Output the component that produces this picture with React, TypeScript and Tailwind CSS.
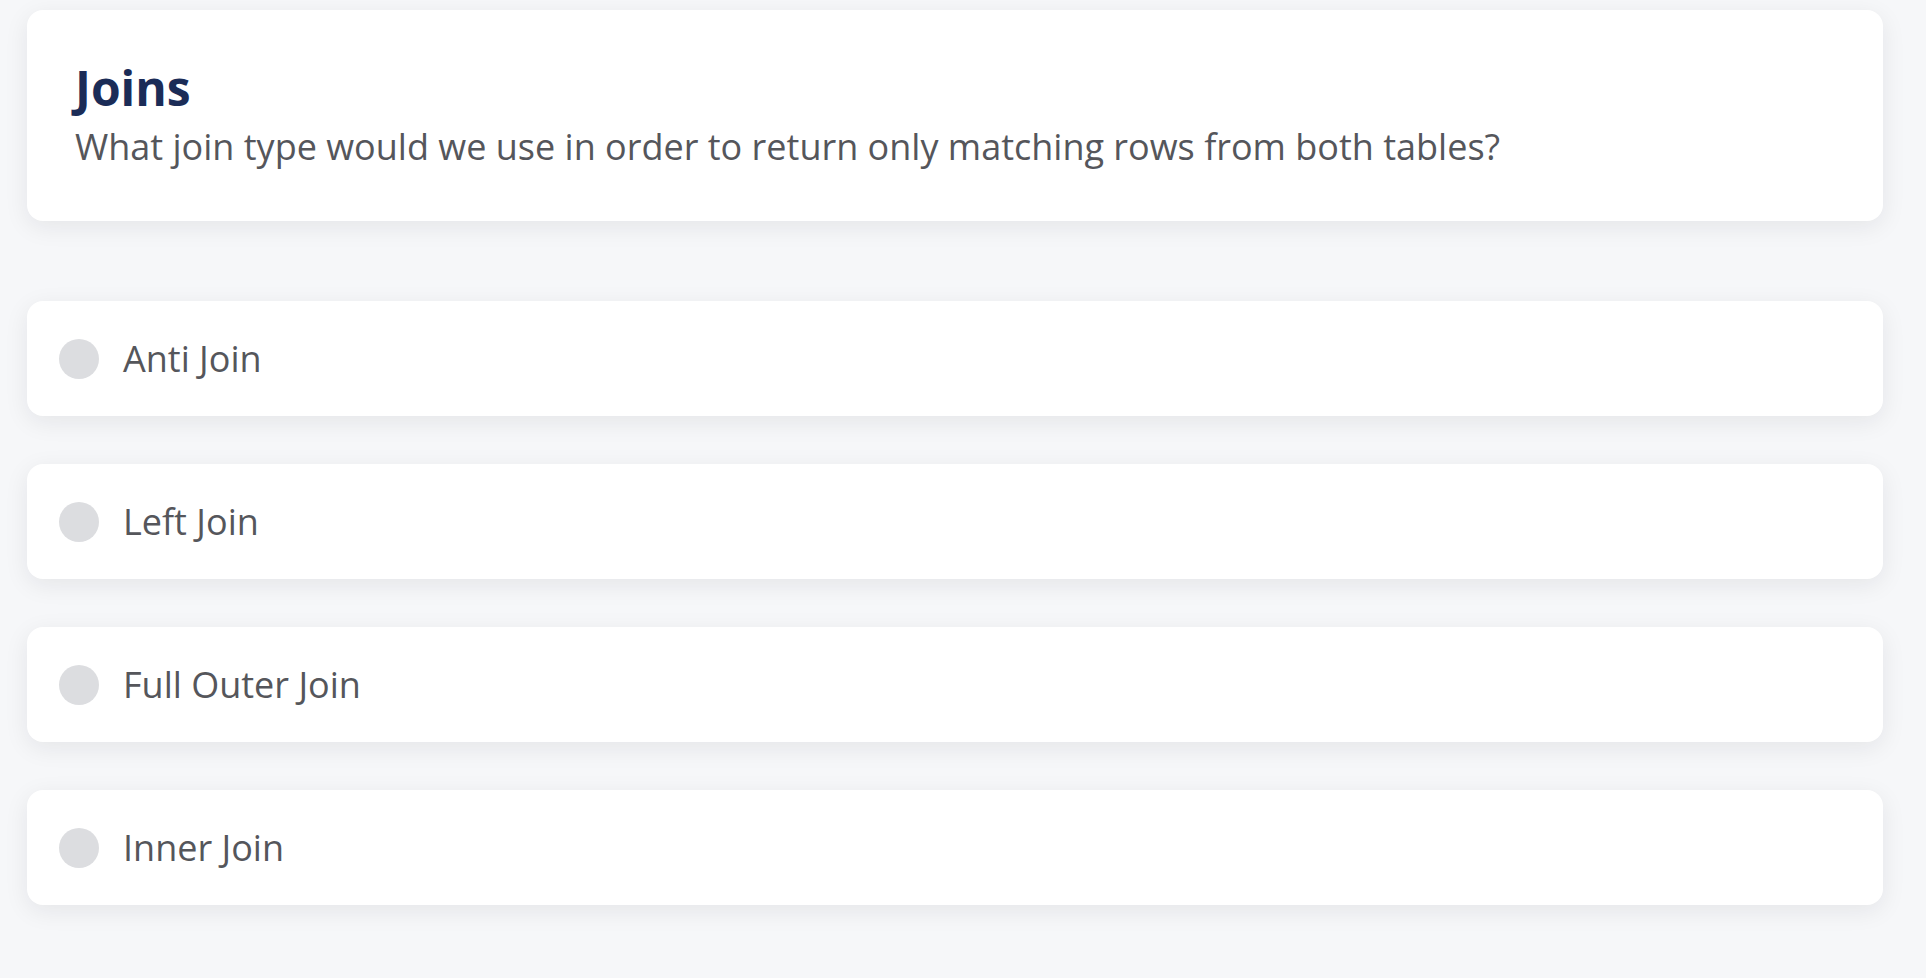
import React from 'react';

const options = ['Anti Join', 'Left Join', 'Full Outer Join', 'Inner Join'];

export default function App() {
  return (
    <div
      className="min-h-screen bg-[#f6f7f9] pl-[27px] pr-[43px] pt-[10px] pb-[73px]"
      style={{ fontFamily: '"Open Sans", "Noto Sans", sans-serif' }}
    >
      <div className="rounded-2xl bg-white px-12 pt-12 pb-[50px] shadow-[0_6px_24px_rgba(20,24,40,0.08)]">
        <h1 className="text-[48px] leading-[60px] font-bold text-[#1b2c57]">Joins</h1>
        <p className="mt-[5px] text-[36px] leading-[48px] text-[#55565b]">
          What join type would we use in order to return only matching rows from both tables?
        </p>
      </div>

      <div className="mt-[80px] flex flex-col gap-12">
        {options.map((label) => (
          <div
            key={label}
            className="flex h-[115px] items-center gap-6 rounded-2xl bg-white px-8 shadow-[0_6px_24px_rgba(20,24,40,0.08)]"
          >
            <span className="h-10 w-10 shrink-0 rounded-full bg-[#dcdde0]" />
            <span className="text-[36px] text-[#55565b]">{label}</span>
          </div>
        ))}
      </div>
    </div>
  );
}
